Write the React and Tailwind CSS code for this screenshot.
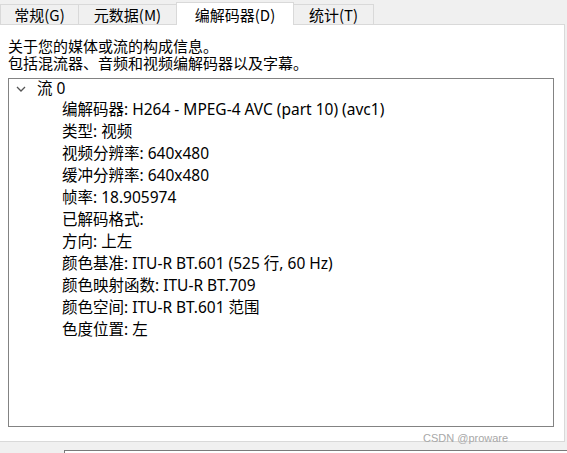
const rows = [
  "编解码器: H264 - MPEG-4 AVC (part 10) (avc1)",
  "类型: 视频",
  "视频分辨率: 640x480",
  "缓冲分辨率: 640x480",
  "帧率: 18.905974",
  "已解码格式:",
  "方向: 上左",
  "颜色基准: ITU-R BT.601 (525 行, 60 Hz)",
  "颜色映射函数: ITU-R BT.709",
  "颜色空间: ITU-R BT.601 范围",
  "色度位置: 左",
];

const tabs = [
  { label: "常规(G)", w: "w-[79px]" },
  { label: "元数据(M)", w: "w-[99px]" },
  { label: "编解码器(D)", w: "w-[118px]", active: true },
  { label: "统计(T)", w: "w-[81px]" },
];

export default function App() {
  return (
    <div className="relative w-[567px] h-[453px] overflow-hidden bg-[#f0f0f0] text-black">
      {/* Tabs */}
      <div className="flex items-end h-6 font-['Noto_Sans_CJK_SC',sans-serif] text-[15px]">
        {tabs.map((t) =>
          t.active ? (
            <div
              key={t.label}
              className={`${t.w} -ml-px h-[23px] -mb-px relative z-10 bg-white border border-b-0 border-[#d9d9d9] flex items-center justify-center leading-none`}
            >
              {t.label}
            </div>
          ) : (
            <div
              key={t.label}
              className={`${t.w} -ml-px first:ml-0 h-5 border border-b-0 border-[#d9d9d9] flex items-center justify-center leading-none`}
            >
              {t.label}
            </div>
          )
        )}
      </div>

      {/* Panel */}
      <div className="w-[565px] h-[418px] bg-white border-t border-r border-b border-[#d9d9d9] pt-[12px]">
        <div className="px-2 font-['Noto_Sans_CJK_SC',sans-serif] text-[15px] leading-[17px]">
          <div>关于您的媒体或流的构成信息。</div>
          <div>包括混流器、音频和视频编解码器以及字幕。</div>
        </div>

        {/* Tree */}
        <div className="ml-2 mt-[7px] w-[546px] h-[349px] border border-[#838383] font-['Noto_Sans','Noto_Sans_CJK_SC',sans-serif] text-[15.5px]">
          <div className="h-[20px] flex items-center">
            <svg className="ml-[7px] w-[10px] h-[6px]" viewBox="0 0 10 6">
              <path d="M1 1 L5 5 L9 1" fill="none" stroke="#555" strokeWidth="1.3" />
            </svg>
            <span className="ml-[11px]">流 0</span>
          </div>
          {rows.map((r) => (
            <div key={r} className="h-[22px] flex items-center pl-[53px] whitespace-nowrap">
              {r}
            </div>
          ))}
        </div>
      </div>

      {/* Bottom box */}
      <div className="ml-[64px] mt-[8px] w-[520px] h-10 bg-white border border-[#7a7a7a]" />

      {/* Watermark */}
      <div className="absolute left-[423px] top-[430px] text-[11px] text-[#a8a8a8] font-['Liberation_Sans',sans-serif]">
        CSDN @proware
      </div>
    </div>
  );
}
